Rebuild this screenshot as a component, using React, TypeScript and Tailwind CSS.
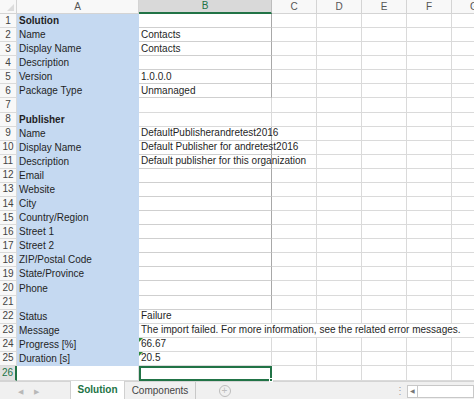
import React from 'react';

type Row = { a?: string; b?: string; bold?: boolean; boxed?: boolean; flag?: boolean; spill?: boolean };

const rows: Row[] = [
    { a: 'Solution', bold: true, boxed: true },
    { a: 'Name', b: 'Contacts', boxed: true },
    { a: 'Display Name', b: 'Contacts', boxed: true },
    { a: 'Description', boxed: true },
    { a: 'Version', b: '1.0.0.0', boxed: true },
    { a: 'Package Type', b: 'Unmanaged', boxed: true },
    {},
    { a: 'Publisher', bold: true },
    { a: 'Name', b: 'DefaultPublisherandretest2016', boxed: true },
    { a: 'Display Name', b: 'Default Publisher for andretest2016', boxed: true },
    { a: 'Description', b: 'Default publisher for this organization', boxed: true },
    { a: 'Email', boxed: true },
    { a: 'Website', boxed: true },
    { a: 'City', boxed: true },
    { a: 'Country/Region', boxed: true },
    { a: 'Street 1', boxed: true },
    { a: 'Street 2', boxed: true },
    { a: 'ZIP/Postal Code', boxed: true },
    { a: 'State/Province', boxed: true },
    { a: 'Phone', boxed: true },
    { boxed: true },
    { a: 'Status', b: 'Failure' },
    { a: 'Message', b: 'The import failed. For more information, see the related error messages.', spill: true },
    { a: 'Progress [%]', b: '66.67', flag: true },
    { a: 'Duration [s]', b: '20.5', flag: true },
];

const extraCols = ['C', 'D', 'E', 'F', 'G'];

// little green "number stored as text" marker
const Flag = () => (
    <svg className="absolute left-0 top-0" width="4" height="4" viewBox="0 0 4 4">
        <polygon points="0,0 4,0 0,4" fill="#2f8a3b" />
    </svg>
);

const DataRow: React.FC<{ n: number; row: Row }> = ({ n, row }) => (
    <div className="flex h-[14.08px]">
        <div className="w-[17px] shrink-0 flex items-center justify-center text-[#444] border-r border-b border-[#dadada] bg-[#f8f8f8]">{n}</div>
        <div className={`w-[122px] shrink-0 bg-[#c5d9f1] pl-[2px] flex items-center text-[#1f1f1f] ${row.bold ? 'font-bold' : ''}`}>{row.a}</div>
        <div
            className={`relative w-[133px] shrink-0 pl-[2px] flex items-center whitespace-nowrap text-[#1f1f1f] border-b ${row.spill ? 'border-b-[#dadada] overflow-visible z-10' : row.boxed ? 'border-r border-b-[#cfcfcf] border-r-[#a8a8a8]' : 'border-r border-[#dadada]'}`}
        >
            {row.flag && <Flag />}
            {row.b}
        </div>
        {extraCols.map((c) => (
            <div key={c} className={`w-[45px] shrink-0 border-b border-[#dadada] ${row.spill && c !== 'G' ? '' : 'border-r'}`} />
        ))}
    </div>
);

const App: React.FC = () => {
    return (
        <div className="w-[474px] h-[399px] overflow-hidden bg-white text-[10px] leading-none" style={{ fontFamily: '"Liberation Sans", Arial, sans-serif' }}>
            {/* column headers */}
            <div className="flex h-[14px] text-[#555] bg-[#f8f8f8]">
                <div className="w-[17px] shrink-0 border-r border-b border-[#d4d4d4] relative">
                    <span className="absolute right-[2px] bottom-[2px] w-0 h-0 border-l-[7px] border-b-[7px] border-l-transparent border-b-[#dcdcdc]" />
                </div>
                <div className="w-[122px] shrink-0 flex items-center justify-center border-r border-b border-[#d4d4d4]">A</div>
                <div className="w-[133px] shrink-0 flex items-center justify-center bg-[#d9d9d9] text-[#217346] border-r border-[#bdbdbd] border-b-2 border-b-[#217346]">B</div>
                {extraCols.map((c) => (
                    <div key={c} className="w-[45px] shrink-0 flex items-center justify-center border-r border-b border-[#d4d4d4]">{c}</div>
                ))}
            </div>

            {rows.map((row, i) => (
                <DataRow key={i} n={i + 1} row={row} />
            ))}

            {/* row 26 with selected cell */}
            <div className="flex h-[15px]">
                <div className="w-[17px] shrink-0 flex items-center justify-center text-[#217346] bg-[#e1e1e1] border-r-2 border-r-[#217346] border-b border-b-[#d4d4d4]">26</div>
                <div className="w-[122px] shrink-0 border-r border-b border-[#dadada]" />
                <div className="relative w-[133px] shrink-0 border-2 border-[#217346]">
                    <span className="absolute -right-[3px] -bottom-[3px] w-[4px] h-[4px] bg-[#217346] border border-white" />
                </div>
                {extraCols.map((c) => (
                    <div key={c} className="w-[45px] shrink-0 border-r border-b border-[#dadada]" />
                ))}
            </div>

            {/* sheet tabs */}
            <div className="flex h-[20px] bg-[#f0f0f0] border-t border-[#d4d4d4] text-[10px]">
                <div className="w-[70px] shrink-0 flex items-center gap-[11px] pl-[18px] text-[#b8b8b8] text-[7px]">
                    <span>◀</span>
                    <span>▶</span>
                </div>
                <div className="w-[55px] shrink-0 -mt-px bg-white flex items-center justify-center font-bold text-[#217346] border-x border-[#d0d0d0] border-b-2 border-b-[#217346]">
                    Solution
                </div>
                <div className="w-[71px] shrink-0 flex items-center justify-center text-[#444] border-r border-[#c8c8c8]">Components</div>
                <div className="w-[57px] shrink-0 flex items-center justify-center">
                    <span className="w-[12px] h-[12px] rounded-full border border-[#bdbdbd] text-[#bdbdbd] flex items-center justify-center text-[10px] leading-none">+</span>
                </div>
                <div className="flex-1" />
                <div className="w-[14px] shrink-0 flex items-center justify-center text-[#a0a0a0] text-[10px]">⋮</div>
                <div className="w-[67px] shrink-0 my-[3px] flex border border-[#c8c8c8] bg-white">
                    <div className="w-[10px] shrink-0 flex items-center justify-center text-[6px] text-[#777] border-r border-[#c8c8c8]">◀</div>
                    <div className="flex-1" />
                </div>
            </div>
        </div>
    );
};

export default App;
